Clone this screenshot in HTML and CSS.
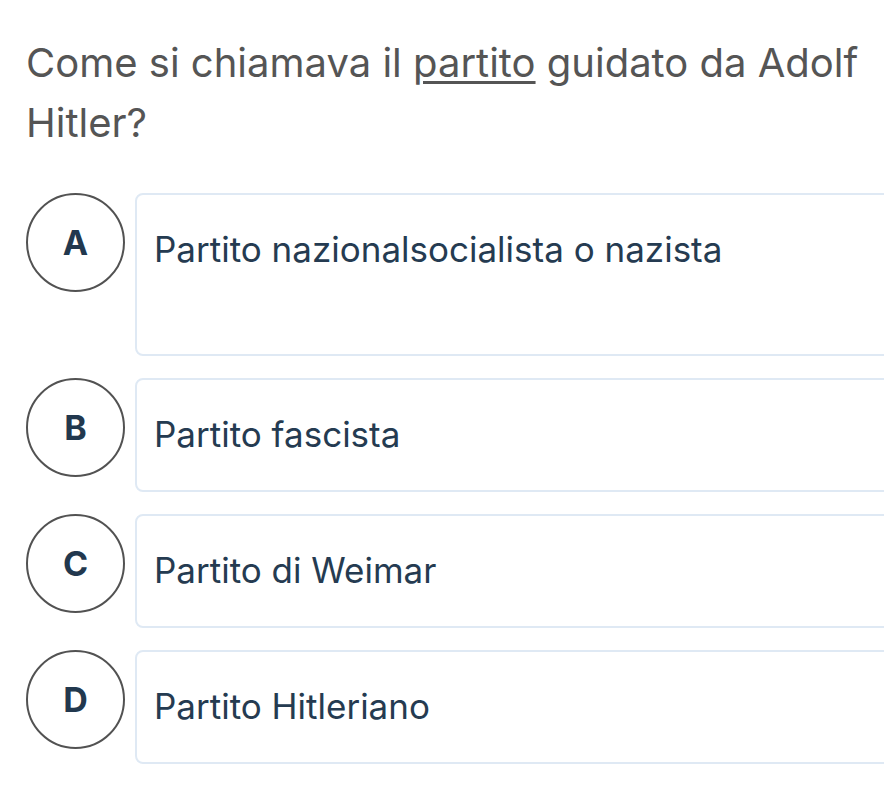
FILE: index.html
```html
<!DOCTYPE html>
<html lang="it">
<head>
<meta charset="utf-8">
<title>Quiz</title>
<link rel="stylesheet" href="styles.css">
</head>
<body>
<main class="quiz">
  <h1 class="question">Come si chiamava il <u class="key">partito</u> guidato da Adolf Hitler?</h1>
  <ol class="options">
    <li class="option">
      <span class="badge">A</span>
      <div class="card card-tall">Partito nazionalsocialista o nazista</div>
    </li>
    <li class="option">
      <span class="badge">B</span>
      <div class="card">Partito fascista</div>
    </li>
    <li class="option">
      <span class="badge">C</span>
      <div class="card">Partito di Weimar</div>
    </li>
    <li class="option">
      <span class="badge">D</span>
      <div class="card">Partito Hitleriano</div>
    </li>
  </ol>
</main>
</body>
</html>
```
FILE: styles.css
```css
html, body {
  margin: 0;
  padding: 0;
  background: #ffffff;
  overflow: hidden;
}

body {
  font-family: Inter, "Noto Sans", "Liberation Sans", sans-serif;
}

.quiz {
  padding: 33px 0 0 26px;
}

.question {
  margin: 0;
  font-size: 40px;
  font-weight: 400;
  line-height: 60px;
  color: #555555;
  letter-spacing: 0;
}

.key {
  text-decoration: underline;
  text-decoration-thickness: 3px;
  text-underline-offset: 4px;
}

.options {
  list-style: none;
  margin: 40px -40px 0 0;
  padding: 0;
  display: flex;
  flex-direction: column;
  gap: 22px;
}

.option {
  display: flex;
  align-items: flex-start;
  gap: 10px;
}

.badge {
  flex: none;
  width: 95px;
  height: 95px;
  border: 2px solid #525252;
  border-radius: 50%;
  display: flex;
  align-items: center;
  justify-content: center;
  font-size: 34px;
  font-weight: 700;
  color: #22384e;
}

.card {
  flex: 1;
  border: 2px solid #dfe9f4;
  border-radius: 8px;
  padding: 28px 20px 30px 17px;
  font-size: 35px;
  line-height: 52px;
  color: #253b51;
}

.card-tall {
  min-height: 101px;
}
```
